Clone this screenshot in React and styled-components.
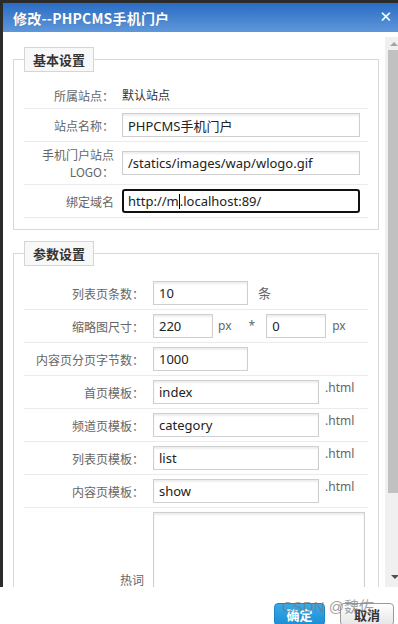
import React from "react";
import styled, { createGlobalStyle } from "styled-components";

const GlobalStyle = createGlobalStyle`
  html, body {
    margin: 0;
    padding: 0;
    background: #2b2b2b;
  }
  * {
    box-sizing: border-box;
  }
`;

const CN = `"Noto Sans CJK SC", "Noto Sans", sans-serif`;
const LATIN = `"Noto Sans", "Noto Sans CJK SC", sans-serif`;

const Dialog = styled.div`
  position: relative;
  width: 398px;
  height: 624px;
  padding-top: 3px;
  background: #2b2b2b;
  overflow: hidden;
  font-family: ${CN};
`;

const TitleBar = styled.div`
  margin-left: 3px;
  height: 29px;
  display: flex;
  align-items: center;
  justify-content: space-between;
  padding: 0 6px 0 10px;
  background: linear-gradient(#2a6cc3, #5f97da);
  color: #fff;
`;

const Title = styled.div`
  font-size: 14px;
  font-weight: bold;
  letter-spacing: 0.2px;
  text-shadow: 0 0 1px rgba(0, 0, 0, 0.2);
`;

const Close = styled.div`
  font-family: "DejaVu Sans", sans-serif;
  font-size: 15px;
  font-weight: bold;
  line-height: 1;
`;

const Body = styled.div`
  margin-left: 3px;
  height: 555px;
  display: flex;
  background: #fff;
`;

const Content = styled.div`
  flex: 1;
  overflow: hidden;
  padding: 15px 6px 0 10px;
`;

const Scrollbar = styled.div`
  position: relative;
  width: 13px;
  margin-top: 5px;
  background: #f0f0f0;
`;

const Thumb = styled.div`
  position: absolute;
  left: 3px;
  right: 0;
  top: 13px;
  height: 443px;
  background: #c1c1c1;
`;

const Arrow = styled.div`
  position: absolute;
  left: 5px;
  width: 0;
  height: 0;
  border-left: 4px solid transparent;
  border-right: 4px solid transparent;
  ${({ down }) =>
    down
      ? `bottom: 8px; left: 6px; border-top: 4px solid #505050;`
      : `top: 5px; border-bottom: 4px solid #a3a3a3;`}
`;

const FieldSet = styled.fieldset`
  margin: ${({ first }) => (first ? "0" : "11px")} 0 0;
  padding: 0 10px ${({ first }) => (first ? "11px" : "10px")};
  border: 1px solid #d8d8d8;
  min-width: 0;
`;

const Legend = styled.legend`
  margin: 0;
  height: 25px;
  padding: 0 8px;
  line-height: 23px;
  border: 1px solid #d5d5d5;
  background: #f8f8f8;
  color: #333;
  font-size: 13px;
  font-weight: bold;
`;

const Rows = styled.div`
  padding-top: ${({ top }) => top}px;
`;

const Row = styled.div`
  display: flex;
  align-items: center;
  padding: 4px 0;
  border-bottom: 1px solid #ebebeb;
`;

const Label = styled.div`
  flex: none;
  width: ${({ w }) => w}px;
  margin-right: ${({ gap }) => gap}px;
  text-align: right;
  color: #666;
  font-size: 12px;
  line-height: 17px;
`;

const Plain = styled.div`
  color: #333;
  font-size: 12px;
  line-height: 18px;
`;

const Input = styled.input`
  width: ${({ w }) => w}px;
  height: 24px;
  padding: 0 5px;
  border: 1px solid #cfcfcf;
  box-shadow: inset 0 2px 2px rgba(0, 0, 0, 0.07);
  background: #fff;
  color: #222;
  font-family: ${LATIN};
  font-size: 13px;
  outline: none;
`;

const Focused = styled.div`
  width: 238px;
  height: 24px;
  padding: 0 4px;
  border: 2px solid #111;
  border-radius: 3px;
  color: #222;
  font-family: ${LATIN};
  font-size: 13px;
  line-height: 20px;
  white-space: nowrap;
`;

const Caret = styled.span`
  display: inline-block;
  width: 1px;
  height: 15px;
  margin: 0 0 -3px;
  background: #000;
`;

const Unit = styled.span`
  color: #666;
  font-size: ${({ size }) => size || 12}px;
  font-family: ${({ cn }) => (cn ? CN : LATIN)};
  margin: 0 ${({ right }) => right || 0}px 0 ${({ left }) => left || 0}px;
  position: relative;
  top: ${({ up }) => (up ? -5 : -1)}px;
`;

const TextArea = styled.textarea`
  width: 212px;
  height: 134px;
  border: 1px solid #cfcfcf;
  box-shadow: inset 0 2px 2px rgba(0, 0, 0, 0.07);
  resize: none;
  outline: none;
`;

const Footer = styled.div`
  position: relative;
  height: 37px;
  background: #fff;
  display: flex;
  justify-content: flex-end;
  align-items: flex-end;
  gap: 15px;
  padding-right: 4px;
`;

const Button = styled.button`
  width: ${({ w }) => w}px;
  height: 23px;
  margin-bottom: -2px;
  border-radius: 4px;
  font-family: ${CN};
  font-size: 13px;
  font-weight: bold;
  padding: 0;
  border: 1px solid ${({ primary }) => (primary ? "#1a86c8" : "#9a9a9a")};
  background: ${({ primary }) =>
    primary ? "linear-gradient(#3aa9e8, #1c8ed6)" : "linear-gradient(#ffffff, #e6e6e6)"};
  color: ${({ primary }) => (primary ? "#fff" : "#333")};
`;

const Watermark = styled.div`
  position: absolute;
  left: 282px;
  top: 12px;
  font-family: "Liberation Sans", ${CN};
  font-size: 15px;
  line-height: 16px;
  color: rgba(120, 120, 120, 0.7);
  pointer-events: none;
  white-space: nowrap;
`;

const templates = [
  ["首页模板：", "index"],
  ["频道页模板：", "category"],
  ["列表页模板：", "list"],
  ["内容页模板：", "show"],
];

const App = () => {
  return (
    <Dialog>
      <GlobalStyle />
      <TitleBar>
        <Title>修改--PHPCMS手机门户</Title>
        <Close>✕</Close>
      </TitleBar>
      <Body>
        <Content>
          <FieldSet first>
            <Legend>基本设置</Legend>
            <Rows top={10}>
              <Row>
                <Label w={90} gap={8}>所属站点：</Label>
                <Plain>默认站点</Plain>
              </Row>
              <Row>
                <Label w={90} gap={8}>站点名称：</Label>
                <Input w={238} defaultValue="PHPCMS手机门户" />
              </Row>
              <Row>
                <Label w={90} gap={8}>
                  手机门户站点
                  <br />
                  LOGO：
                </Label>
                <Input w={238} defaultValue="/statics/images/wap/wlogo.gif" />
              </Row>
              <Row>
                <Label w={90} gap={8}>绑定域名</Label>
                <Focused>
                  http://m<Caret />.localhost:89/
                </Focused>
              </Row>
            </Rows>
          </FieldSet>

          <FieldSet>
            <Legend>参数设置</Legend>
            <Rows top={11}>
              <Row>
                <Label w={120} gap={9}>列表页条数：</Label>
                <Input w={95} defaultValue="10" />
                <Unit cn left={10} size={13}>条</Unit>
              </Row>
              <Row>
                <Label w={120} gap={9}>缩略图尺寸：</Label>
                <Input w={60} defaultValue="220" />
                <Unit left={5}>px</Unit>
                <Unit left={17} right={11}>*</Unit>
                <Input w={60} defaultValue="0" />
                <Unit left={6}>px</Unit>
              </Row>
              <Row>
                <Label w={120} gap={9}>内容页分页字节数：</Label>
                <Input w={95} defaultValue="1000" />
              </Row>
              {templates.map(([label, value]) => (
                <Row key={label}>
                  <Label w={120} gap={9}>{label}</Label>
                  <Input w={166} defaultValue={value} />
                  <Unit up left={6}>.html</Unit>
                </Row>
              ))}
              <Row>
                <Label w={120} gap={9}>热词</Label>
                <TextArea />
              </Row>
            </Rows>
          </FieldSet>
        </Content>
        <Scrollbar>
          <Arrow />
          <Thumb />
          <Arrow down />
        </Scrollbar>
      </Body>
      <Footer>
        <Button primary w={51}>确定</Button>
        <Button w={54}>取消</Button>
        <Watermark>CSDN @魏佐</Watermark>
      </Footer>
    </Dialog>
  );
};

export default App;
